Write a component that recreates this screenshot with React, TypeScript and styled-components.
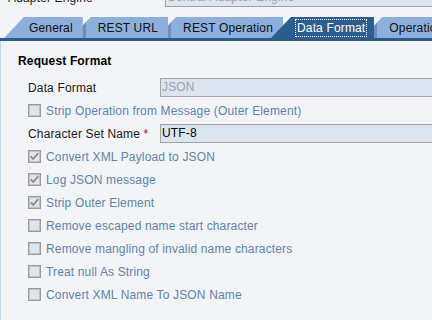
import styled, { createGlobalStyle } from "styled-components";

const GlobalStyle = createGlobalStyle`
  html, body {
    margin: 0;
    padding: 0;
    background: #f2f4f8;
    overflow: hidden;
  }
  body {
    font-family: "Liberation Sans", Arial, sans-serif;
    font-size: 12px;
    letter-spacing: 0.15px;
    color: #1f1f1f;
  }
`;

const Page = styled.div`
  width: 432px;
  height: 320px;
  overflow: hidden;
  display: flex;
  flex-direction: column;
`;

const TopRow = styled.div`
  display: flex;
  align-items: center;
  height: 19px;
  margin-top: -12px;
  padding-left: 8px;
  flex: none;
`;

const TopLabel = styled.div`
  width: 157px;
  flex: none;
`;

const TextBox = styled.div<{ $disabled?: boolean }>`
  flex: 1;
  height: 19px;
  box-sizing: border-box;
  border: 1px solid #a3a3a3;
  border-right: none;
  background: #dbe5f2;
  padding-left: 1px;
  line-height: 17px;
  color: ${(props) => (props.$disabled ? "#a2a2a2" : "#000")};
  white-space: nowrap;
  overflow: hidden;
`;

const TabStrip = styled.div`
  margin-top: 10px;
  height: 21px;
  display: flex;
  padding-left: 4px;
  border-bottom: 3px solid #2c5b8b;
  flex: none;
`;

const Tab = styled.div<{ $active?: boolean; $layer: number; $shade?: boolean }>`
  position: relative;
  z-index: ${(props) => (props.$active ? 20 : props.$layer)};
  flex: none;
  height: 21px;
  margin-left: -12px;
  padding: ${(props) => (props.$active ? "0 7px 0 24px" : "0 10px 0 27px")};
  display: flex;
  align-items: center;
  white-space: nowrap;
  clip-path: polygon(0 100%, 20px 0, 100% 0, 100% 100%);
  color: ${(props) => (props.$active ? "#fff" : "#111")};
  background: ${(props) =>
    props.$active
      ? "#2c5d90"
      : props.$shade
      ? "linear-gradient(to right, #6a8ebd 0 15px, #8cafdb 15px)"
      : "#8cafdb"};

  &:first-child {
    margin-left: 0;
    padding-left: 25px;
  }
`;

const FocusText = styled.span`
  border: 1px dotted #fff;
  padding: 0 1px;
  line-height: 16px;
`;

const Panel = styled.div`
  flex: 1;
  border-left: 1px solid #c6d6ec;
  padding: 13px 0 0 17px;
`;

const Heading = styled.div`
  font-weight: bold;
  line-height: 14px;
  margin-bottom: 8px;
  color: #000;
`;

const Form = styled.div`
  display: flex;
  flex-direction: column;
  padding-left: 10px;
`;

const Row = styled.div`
  height: 23px;
  display: flex;
  align-items: center;
`;

const FieldLabel = styled.div`
  width: 132px;
  flex: none;
  color: #1a1a1a;
`;

const Required = styled.span`
  color: #d40000;
`;

const Box = styled.span`
  width: 13px;
  height: 13px;
  box-sizing: border-box;
  border: 1px solid #9b9b9b;
  box-shadow: inset 0 0 0 1px #c2c2c2;
  background: #dfe5ee;
  margin-right: 5px;
  display: flex;
  align-items: center;
  justify-content: center;
  flex: none;
`;

const CheckText = styled.span`
  color: #5f83ab;
  white-space: nowrap;
`;

const tabs = [
  { label: "General" },
  { label: "REST URL" },
  { label: "REST Operation" },
  { label: "Data Format", active: true },
  { label: "Operation Mapping" },
];

const checks = [
  { label: "Convert XML Payload to JSON", checked: true },
  { label: "Log JSON message", checked: true },
  { label: "Strip Outer Element", checked: true },
  { label: "Remove escaped name start character" },
  { label: "Remove mangling of invalid name characters" },
  { label: "Treat null As String" },
  { label: "Convert XML Name To JSON Name" },
];

function CheckRow({ label, checked }: { label: string; checked?: boolean }) {
  return (
    <Row>
      <Box>
        {checked && (
          <svg width="9" height="9" viewBox="0 0 9 9">
            <path d="M0.8 4.4 L3.2 7 L8.2 1.2" fill="none" stroke="#8a8a8a" strokeWidth="1.8" />
          </svg>
        )}
      </Box>
      <CheckText>{label}</CheckText>
    </Row>
  );
}

export default function App() {
  return (
    <Page>
      <GlobalStyle />
      <TopRow>
        <TopLabel>Adapter Engine</TopLabel>
        <TextBox $disabled>Central Adapter Engine</TextBox>
      </TopRow>
      <TabStrip>
        {tabs.map((tab, i) => (
          <Tab key={tab.label} $active={tab.active} $layer={10 - i} $shade={i > 0}>
            {tab.active ? <FocusText>{tab.label}</FocusText> : tab.label}
          </Tab>
        ))}
      </TabStrip>
      <Panel>
        <Heading>Request Format</Heading>
        <Form>
          <Row>
            <FieldLabel>Data Format</FieldLabel>
            <TextBox $disabled>JSON</TextBox>
          </Row>
          <CheckRow label="Strip Operation from Message (Outer Element)" />
          <Row>
            <FieldLabel>
              Character Set Name <Required>*</Required>
            </FieldLabel>
            <TextBox>UTF-8</TextBox>
          </Row>
          {checks.map((c) => (
            <CheckRow key={c.label} label={c.label} checked={c.checked} />
          ))}
        </Form>
      </Panel>
    </Page>
  );
}
